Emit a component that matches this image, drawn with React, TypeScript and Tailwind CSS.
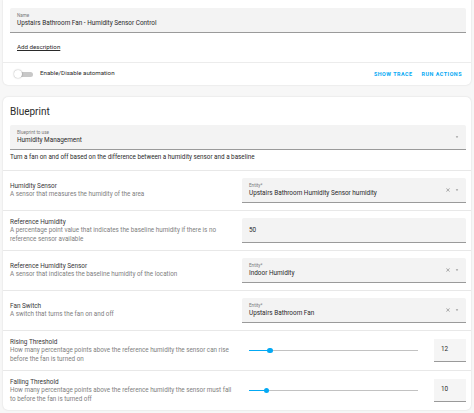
import React from "react";

const ClearIcon = () => (
  <svg viewBox="0 0 24 24" className="w-[6px] h-[6px]" fill="#737373">
    <path d="M19,6.41L17.59,5L12,10.59L6.41,5L5,6.41L10.59,12L5,17.59L6.41,19L12,13.41L17.59,19L19,17.59L13.41,12L19,6.41Z" />
  </svg>
);

const ArrowIcon = () => (
  <svg viewBox="0 0 24 24" className="w-[6px] h-[6px]" fill="#737373">
    <path d="M7,10L12,15L17,10H7Z" />
  </svg>
);

function Field({
  label,
  value,
  clear,
  arrow,
  className = "",
}: {
  label?: string;
  value: string;
  clear?: boolean;
  arrow?: boolean;
  className?: string;
}) {
  return (
    <div
      className={`h-[25px] bg-[#f3f3f3] rounded-t-[2px] border-b border-[#9a9a9a] pl-[7px] pr-[6px] flex items-center ${className}`}
    >
      <div className="flex-1 flex flex-col min-w-0">
        {label && (
          <span className="text-[4.6px] leading-[6px] text-[#7a7a7a]">{label}</span>
        )}
        <span className="text-[6.4px] leading-[8px] text-[#2a2a2a] whitespace-nowrap">{value}</span>
      </div>
      {clear && (
        <span className="mr-[3px]">
          <ClearIcon />
        </span>
      )}
      {arrow && <ArrowIcon />}
    </div>
  );
}

function Slider({ pct }: { pct: number }) {
  return (
    <div className="flex-1 relative h-[8px] flex items-center px-[7px]">
      <div className="relative w-full h-[1.5px] bg-[#c2c2c2]">
        <div className="absolute left-0 top-0 h-full bg-[#03a9f4]" style={{ width: `${pct}%` }} />
        <div
          className="absolute top-[-2px] w-[5.5px] h-[5.5px] -ml-[2.75px] rounded-full bg-[#03a9f4]"
          style={{ left: `${pct}%` }}
        />
      </div>
    </div>
  );
}

function Row({
  title,
  desc,
  children,
}: {
  title: string;
  desc: string;
  children: React.ReactNode;
}) {
  return (
    <div className="h-[40px] border-t border-[#e8e8e8] flex items-center pl-[7px] pr-[5px]">
      <div className="flex-1 pr-[4px]">
        <div className="text-[6.4px] leading-[8px] text-[#383838]">{title}</div>
        <div className="text-[6.3px] leading-[8.5px] text-[#808080]">{desc}</div>
      </div>
      <div className="w-[224px] shrink-0 flex items-center">{children}</div>
    </div>
  );
}

export default function App() {
  return (
    <div className="w-[474px] h-[413px] overflow-hidden bg-[#f7f7f7] px-[3px] font-['Roboto',sans-serif]">
      <div className="bg-white rounded-b-[5px] shadow-[0_0_2px_rgba(0,0,0,0.14)]">
        <div className="pt-[8px] pl-[7px] pr-[5px]">
          <Field label="Name" value="Upstairs Bathroom Fan - Humidity Sensor Control" />
        </div>
        <div className="h-[29px] flex items-center pl-[14px]">
          <span className="text-[6.2px] text-[#2a2a2a] underline">Add description</span>
        </div>
        <div className="h-[23px] border-t border-[#ececec] flex items-center pl-[11px] pr-[9px]">
          <div className="relative w-[17px] h-[5px] rounded-full bg-[#c8c8c8] ml-[2px]">
            <div className="absolute left-[-2px] top-[-1.5px] w-[8px] h-[8px] rounded-full bg-white shadow-[0_0_1.5px_rgba(0,0,0,0.45)]" />
          </div>
          <span className="ml-[7px] text-[6.2px] text-[#2a2a2a]">Enable/Disable automation</span>
          <div className="flex-1" />
          <span className="text-[5.4px] font-bold tracking-[0.5px] text-[#03a9f4]">SHOW TRACE</span>
          <span className="ml-[9px] text-[5.4px] font-bold tracking-[0.5px] text-[#03a9f4]">RUN ACTIONS</span>
        </div>
      </div>

      <div className="mt-[12px] bg-white rounded-[5px] shadow-[0_0_2px_rgba(0,0,0,0.14)]">
        <div className="h-[28px] flex items-center pl-[7px]">
          <span className="text-[10px] text-[#2a2a2a]">Blueprint</span>
        </div>
        <div className="pl-[7px] pr-[5px]">
          <Field label="Blueprint to use" value="Humidity Management" arrow />
        </div>
        <div className="h-[20px] pl-[7px] pt-[3px] text-[6.3px] leading-[8px] text-[#2a2a2a]">
          Turn a fan on and off based on the difference between a humidity sensor and a baseline
        </div>

        <Row title="Humidity Sensor" desc="A sensor that measures the humidity of the area">
          <Field className="w-full" label="Entity*" value="Upstairs Bathroom Humidity Sensor humidity" clear arrow />
        </Row>
        <Row
          title="Reference Humidity"
          desc="A percentage point value that indicates the baseline humidity if there is no reference sensor available"
        >
          <Field className="w-full" value="50" />
        </Row>
        <Row
          title="Reference Humidity Sensor"
          desc="A sensor that indicates the baseline humidity of the location"
        >
          <Field className="w-full" label="Entity*" value="Indoor Humidity" clear arrow />
        </Row>
        <Row title="Fan Switch" desc="A switch that turns the fan on and off">
          <Field className="w-full" label="Entity*" value="Upstairs Bathroom Fan" clear arrow />
        </Row>
        <Row
          title="Rising Threshold"
          desc="How many percentage points above the reference humidity the sensor can rise before the fan is turned on"
        >
          <Slider pct={12.5} />
          <div className="ml-[9px] w-[32px] h-[23px] bg-[#f5f5f5] border-b border-[#9a9a9a] flex items-center pl-[7px]">
            <span className="text-[6.4px] text-[#2a2a2a]">12</span>
          </div>
        </Row>
        <Row
          title="Falling Threshold"
          desc="How many percentage points above the reference humidity the sensor must fall to before the fan is turned off"
        >
          <Slider pct={10.3} />
          <div className="ml-[9px] w-[32px] h-[23px] bg-[#f5f5f5] border-b border-[#9a9a9a] flex items-center pl-[7px]">
            <span className="text-[6.4px] text-[#2a2a2a]">10</span>
          </div>
        </Row>
      </div>
    </div>
  );
}
